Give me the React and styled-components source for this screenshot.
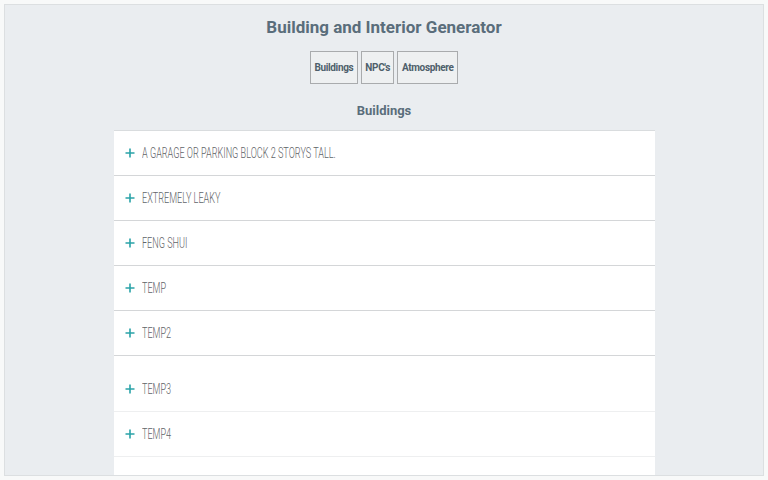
import styled, { createGlobalStyle } from "styled-components";

const items = [
  { label: "A garage or parking block 2 storys tall.", strong: true },
  { label: "Extremely leaky", strong: true },
  { label: "Feng Shui", strong: true },
  { label: "temp", strong: true },
  { label: "temp2", strong: true },
  { label: "temp3", tall: true },
  { label: "temp4" },
];

export default function App() {
  return (
    <>
      <Global />
      <Panel>
        <Title>Building and Interior Generator</Title>
        <Tabs>
          <Tab>Buildings</Tab>
          <Tab>NPC's</Tab>
          <Tab>Atmosphere</Tab>
        </Tabs>
        <Subtitle>Buildings</Subtitle>
        <List>
          {items.map((item) => (
            <Row key={item.label} $strong={item.strong} $tall={item.tall}>
              <Plus viewBox="0 0 10 10">
                <path d="M5 0.5v9M0.5 5h9" />
              </Plus>
              <RowText>{item.label}</RowText>
            </Row>
          ))}
          <Row />
        </List>
      </Panel>
    </>
  );
}

// ***************** Component Styles
const Global = createGlobalStyle`
  html, body {
    margin: 0;
    background: #f8f9f9;
    overflow: hidden;
  }
  * { box-sizing: border-box; }
`;

const Panel = styled.main`
  margin: 4px;
  height: 472px;
  border: 1px solid #dcdfe1;
  background-color: #eaedf0;
  overflow: hidden;
  display: flex;
  flex-direction: column;
  align-items: center;
  padding-top: 12px;
  font-family: Roboto, "Liberation Sans", sans-serif;
`;

const Title = styled.h1`
  margin: 0;
  font-size: 17px;
  line-height: 20px;
  font-weight: 700;
  color: #5a6d7b;
`;

const Tabs = styled.div`
  display: flex;
  gap: 3px;
  margin-top: 14px;
`;

const Tab = styled.button`
  height: 33px;
  padding: 0 3.5px;
  border: 1px solid #a9abad;
  background-color: #eef0f1;
  font-family: Roboto, "Liberation Sans", sans-serif;
  font-size: 10px;
  font-weight: 700;
  color: #4f5f6b;
  letter-spacing: -0.35px;
`;

const Subtitle = styled.h2`
  margin: 19px 0 0;
  font-size: 13px;
  line-height: 16px;
  font-weight: 700;
  color: #5a6d7b;
`;

const List = styled.ul`
  list-style: none;
  margin: 11px 0 0;
  padding: 0;
  width: 541px;
  background: #fff;
  border-top: 1px solid #d9dcde;
`;

const Row = styled.li`
  display: flex;
  align-items: center;
  flex-shrink: 0;
  height: ${(p) => (p.$tall ? 56 : 45)}px;
  padding: ${(p) => (p.$tall ? "11px" : "0")} 0 0 11px;
  border-bottom: 1px solid ${(p) => (p.$strong ? "#d4d6d8" : "#eeeff0")};
`;

const Plus = styled.svg`
  width: 10px;
  height: 10px;
  margin-right: 7px;
  stroke: #2aa3a8;
  stroke-width: 1.6;
  fill: none;
`;

const RowText = styled.span`
  display: inline-block;
  font-family: Roboto, "Liberation Sans", sans-serif;
  font-size: 14px;
  font-weight: 300;
  text-transform: uppercase;
  color: #5f6468;
  transform: scaleX(0.65);
  transform-origin: left center;
  white-space: nowrap;
`;
